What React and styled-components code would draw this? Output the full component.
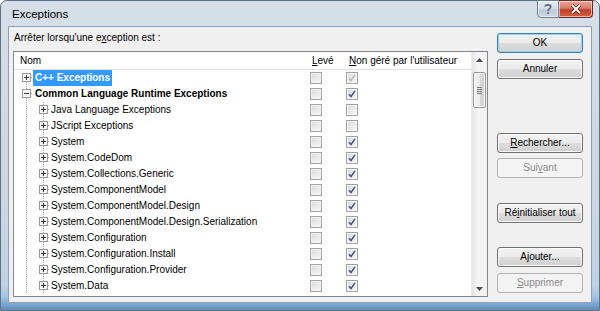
import React from "react";
import styled, { createGlobalStyle } from "styled-components";

const GlobalStyle = createGlobalStyle`
  html, body {
    margin: 0;
    padding: 0;
    background: #ffffff;
  }
  body {
    font-family: "Liberation Sans", Arial, sans-serif;
    font-size: 10px;
    color: #000;
  }
`;

const Window = styled.div`
  width: 600px;
  height: 311px;
  box-sizing: border-box;
  display: flex;
  flex-direction: column;
  border: 1px solid #5f7184;
  border-radius: 7px 7px 0 0;
  padding: 0 7px 7px 7px;
  background: linear-gradient(
    to bottom,
    #d6dee7 0%,
    #cdd7e1 60%,
    #bfd3e6 92%,
    #9ec3e3 96%,
    #5d8bb7 100%
  );
`;

const TitleBar = styled.div`
  height: 25px;
  display: flex;
  align-items: flex-start;
`;

const Title = styled.div`
  flex: 1;
  padding: 5px 0 0 4px;
  font-size: 11.5px;
  line-height: 16px;
  color: #000;
`;

const CaptionButton = styled.div`
  height: 18px;
  width: ${(p) => (p.$close ? 34 : 22)}px;
  margin-top: -1px;
  margin-right: ${(p) => (p.$close ? -1 : 0)}px;
  box-sizing: border-box;
  display: flex;
  align-items: center;
  justify-content: center;
  border: 1px solid ${(p) => (p.$close ? "#6b2a24" : "#6d7f95")};
  border-left-width: ${(p) => (p.$close ? 0 : 1)}px;
  border-radius: ${(p) => (p.$close ? "0 0 4px 0" : "0 0 0 4px")};
  box-shadow: inset 0 0 0 1px rgba(255, 255, 255, 0.55);
  background: ${(p) =>
    p.$close
      ? "linear-gradient(to bottom, #e8a596 0%, #d97c68 45%, #c0402a 55%, #d3603f 100%)"
      : "linear-gradient(to bottom, #e7edf3 0%, #d6dee8 45%, #bccad9 55%, #cbd8e6 100%)"};
`;

const Client = styled.div`
  flex: 1;
  display: flex;
  border: 1px solid #8ea2b7;
  background: #f0f0f0;
  padding: 4px 8px 5px 4px;
`;

const LeftColumn = styled.div`
  width: 475px;
  display: flex;
  flex-direction: column;
`;

const Caption = styled.div`
  height: 14px;
  line-height: 14px;
  padding-left: 1px;
  margin-bottom: 6px;
`;

const ListBox = styled.div`
  flex: 1;
  display: flex;
  border: 1px solid #828790;
  background: #ffffff;
  overflow: hidden;
`;

const ListContent = styled.div`
  flex: 1;
  display: flex;
  flex-direction: column;
`;

const Columns = styled.div`
  display: grid;
  grid-template-columns: 293px 36px 1fr;
  align-items: center;
`;

const HeaderRow = styled(Columns)`
  height: 17px;
  border-bottom: 1px solid #e3e3e3;
`;

const HeaderCell = styled.div`
  padding-left: ${(p) => p.$pad}px;
  line-height: 17px;
  white-space: nowrap;
`;

const Row = styled(Columns)`
  height: 16px;
`;

const NameCell = styled.div`
  display: flex;
  align-items: center;
  height: 16px;
  white-space: nowrap;
`;

const NodeLabel = styled.span`
  padding: 0 2px;
  line-height: 16px;
  font-weight: ${(p) => (p.$bold ? 700 : 400)};
  background: ${(p) => (p.$selected ? "#3399ff" : "transparent")};
  color: ${(p) => (p.$selected ? "#ffffff" : "#000000")};
`;

const CheckCell = styled.div`
  padding-left: 3px;
  display: flex;
  align-items: center;
`;

const CheckBox = styled.span`
  width: 12px;
  height: 12px;
  box-sizing: border-box;
  border: 1px solid #a2a2a2;
  background: linear-gradient(135deg, #d9d9d9 0%, #ececec 60%, #f8f8f8 100%);
  box-shadow: inset 0 0 0 1px #f6f6f6;
  display: flex;
  align-items: center;
  justify-content: center;
`;

const ScrollBar = styled.div`
  width: 15px;
  display: flex;
  flex-direction: column;
  background: linear-gradient(to right, #e6e6e6 0%, #f5f5f5 40%, #f1f1f1 100%);
  border-left: 1px solid #ececec;
`;

const ArrowBox = styled.div`
  height: 15px;
  display: flex;
  align-items: center;
  justify-content: center;
`;

const Track = styled.div`
  flex: 1;
  padding: 5px 1px 0 1px;
`;

const Thumb = styled.div`
  height: 36px;
  box-sizing: border-box;
  border: 1px solid #979797;
  border-radius: 2px;
  background: linear-gradient(to right, #f4f4f4 0%, #eaeaea 50%, #d9d9d9 51%, #cfcfcf 100%);
  box-shadow: inset 0 0 0 1px #fbfbfb;
  display: flex;
  flex-direction: column;
  align-items: center;
  justify-content: center;
  gap: 1px;
`;

const Grip = styled.span`
  width: 5px;
  height: 1px;
  background: #7a7a7a;
`;

const RightColumn = styled.div`
  width: 86px;
  margin-left: 9px;
  padding-top: 2px;
  display: flex;
  flex-direction: column;
`;

const Button = styled.button`
  width: 86px;
  height: 20px;
  margin: ${(p) => p.$top || 0}px 0 0 0;
  padding: 0;
  box-sizing: border-box;
  font-family: "Liberation Sans", Arial, sans-serif;
  font-size: 10px;
  line-height: 16px;
  border-radius: 3px;
  border: 1px solid ${(p) => (p.$default ? "#3c7fb1" : "#707070")};
  color: #000;
  background: linear-gradient(to bottom, #f2f2f2 0%, #ebebeb 48%, #dddddd 52%, #cfcfcf 100%);
  box-shadow: inset 0 0 0 1px ${(p) => (p.$default ? "#8fd3f3" : "#fbfbfb")};
  &:disabled {
    border-color: #adb2b5;
    background: #f4f4f4;
    box-shadow: none;
    color: #8a8a8a;
  }
`;

const rows = [
  { name: "C++ Exceptions", level: 0, node: "plus", selected: true, first: true, thrown: false, user: "disabled" },
  { name: "Common Language Runtime Exceptions", level: 0, node: "minus", thrown: false, user: "checked" },
  { name: "Java Language Exceptions", level: 1, node: "plus", thrown: false, user: "off" },
  { name: "JScript Exceptions", level: 1, node: "plus", thrown: false, user: "off" },
  { name: "System", level: 1, node: "plus", thrown: false, user: "checked" },
  { name: "System.CodeDom", level: 1, node: "plus", thrown: false, user: "checked" },
  { name: "System.Collections.Generic", level: 1, node: "plus", thrown: false, user: "checked" },
  { name: "System.ComponentModel", level: 1, node: "plus", thrown: false, user: "checked" },
  { name: "System.ComponentModel.Design", level: 1, node: "plus", thrown: false, user: "checked" },
  { name: "System.ComponentModel.Design.Serialization", level: 1, node: "plus", thrown: false, user: "checked" },
  { name: "System.Configuration", level: 1, node: "plus", thrown: false, user: "checked" },
  { name: "System.Configuration.Install", level: 1, node: "plus", thrown: false, user: "checked" },
  { name: "System.Configuration.Provider", level: 1, node: "plus", thrown: false, user: "checked" },
  { name: "System.Data", level: 1, node: "plus", thrown: false, user: "checked" },
];

const dotted = { stroke: "#a0a0a0", strokeWidth: 1, strokeDasharray: "1 1" };

// expander box with plus / minus
const Expander = ({ x, node }) => (
  <g>
    <rect x={x + 0.5} y={3.5} width={8} height={8} fill="#f7f7f7" stroke="#989898" />
    <line x1={x + 2} y1={7.5} x2={x + 7} y2={7.5} stroke="#3c3c3c" />
    {node === "plus" && <line x1={x + 4.5} y1={5} x2={x + 4.5} y2={10} stroke="#3c3c3c" />}
  </g>
);

const TreeGuide = ({ level, node, first }) => {
  const width = level === 0 ? 19 : 35;
  return (
    <svg width={width} height={16} viewBox={`0 0 ${width} 16`}>
      <line x1={12.5} y1={first ? 8 : 0} x2={12.5} y2={16} {...dotted} />
      {level === 0 && <line x1={17} y1={7.5} x2={19} y2={7.5} {...dotted} />}
      {level === 1 && <line x1={29.5} y1={0} x2={29.5} y2={16} {...dotted} />}
      {level === 1 && <line x1={34} y1={7.5} x2={35} y2={7.5} {...dotted} />}
      <Expander x={level === 0 ? 8 : 25} node={node} />
    </svg>
  );
};

const Check = ({ state }) => (
  <CheckBox>
    {state !== "off" && (
      <svg width="8" height="8" viewBox="0 0 8 8">
        <path
          d="M1 4.2 L3 6.5 L7 0.8"
          fill="none"
          stroke={state === "disabled" ? "#b4b4b4" : "#3b4d8e"}
          strokeWidth="1.4"
        />
      </svg>
    )}
  </CheckBox>
);

const HelpGlyph = () => (
  <svg width="10" height="12" viewBox="0 0 10 12">
    <path d="M2.2 3.6 C2.2 1.4 7.8 1.2 7.8 3.8 C7.8 5.6 5 5.6 5 8" fill="none" stroke="#5b6675" strokeWidth="1.6" />
    <rect x="4.2" y="9.2" width="1.7" height="1.7" fill="#5b6675" />
  </svg>
);

const CloseGlyph = () => (
  <svg width="12" height="10" viewBox="0 0 12 10">
    <path d="M2 1 L10 9 M10 1 L2 9" stroke="#5a1a12" strokeWidth="3.2" />
    <path d="M2 1 L10 9 M10 1 L2 9" stroke="#ffffff" strokeWidth="1.8" />
  </svg>
);

const Arrow = ({ up }) => (
  <svg width="7" height="4" viewBox="0 0 7 4">
    <path d={up ? "M0 4 L3.5 0 L7 4 Z" : "M0 0 L3.5 4 L7 0 Z"} fill="#4d4d4d" />
  </svg>
);

export default function App() {
  return (
    <>
      <GlobalStyle />
      <Window>
        <TitleBar>
          <Title>Exceptions</Title>
          <CaptionButton>
            <HelpGlyph />
          </CaptionButton>
          <CaptionButton $close>
            <CloseGlyph />
          </CaptionButton>
        </TitleBar>
        <Client>
          <LeftColumn>
            <Caption>
              Arrêter lorsqu'une e<u>x</u>ception est :
            </Caption>
            <ListBox>
              <ListContent>
                <HeaderRow>
                  <HeaderCell $pad={6}>Nom</HeaderCell>
                  <HeaderCell $pad={5}>
                    <u>L</u>evé
                  </HeaderCell>
                  <HeaderCell $pad={6}>
                    <u>N</u>on géré par l'utilisateur
                  </HeaderCell>
                </HeaderRow>
                {rows.map((r) => (
                  <Row key={r.name}>
                    <NameCell>
                      <TreeGuide level={r.level} node={r.node} first={r.first} />
                      <NodeLabel $bold={r.level === 0} $selected={r.selected}>
                        {r.name}
                      </NodeLabel>
                    </NameCell>
                    <CheckCell>
                      <Check state={r.thrown ? "checked" : "off"} />
                    </CheckCell>
                    <CheckCell>
                      <Check state={r.user} />
                    </CheckCell>
                  </Row>
                ))}
              </ListContent>
              <ScrollBar>
                <ArrowBox>
                  <Arrow up />
                </ArrowBox>
                <Track>
                  <Thumb>
                    <Grip />
                    <Grip />
                    <Grip />
                    <Grip />
                  </Thumb>
                </Track>
                <ArrowBox>
                  <Arrow />
                </ArrowBox>
              </ScrollBar>
            </ListBox>
          </LeftColumn>
          <RightColumn>
            <Button $default>OK</Button>
            <Button $top={6}>Annuler</Button>
            <Button $top={54}>
              <u>R</u>echercher...
            </Button>
            <Button $top={5} disabled>
              Sui<u>v</u>ant
            </Button>
            <Button $top={25}>
              Ré<u>i</u>nitialiser tout
            </Button>
            <Button $top={24}>
              A<u>j</u>outer...
            </Button>
            <Button $top={6} disabled>
              <u>S</u>upprimer
            </Button>
          </RightColumn>
        </Client>
      </Window>
    </>
  );
}
